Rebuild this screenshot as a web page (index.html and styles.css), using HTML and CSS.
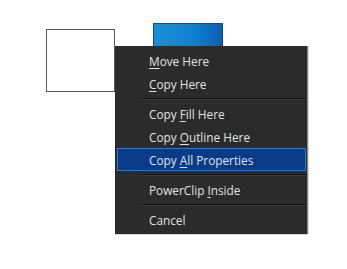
FILE: index.html
```html
<!DOCTYPE html>
<html>
<head>
<meta charset="utf-8">
<link rel="stylesheet" href="styles.css">
</head>
<body>
<div class="canvas">
  <div class="shape-white"></div>
  <div class="shape-blue"></div>
  <div class="menu">
    <div class="item"><span class="label"><u>M</u>ove Here</span></div>
    <div class="item"><span class="label"><u>C</u>opy Here</span></div>
    <div class="sep"></div>
    <div class="item"><span class="label">Copy <u>F</u>ill Here</span></div>
    <div class="item"><span class="label">Copy <u>O</u>utline Here</span></div>
    <div class="item active"><span class="label">Copy <u>A</u>ll Properties</span></div>
    <div class="sep"></div>
    <div class="item"><span class="label">PowerClip <u>I</u>nside</span></div>
    <div class="sep"></div>
    <div class="item"><span class="label">Cancel</span></div>
  </div>
</div>
</body>
</html>
```
FILE: styles.css
```css
html, body {
  margin: 0;
  padding: 0;
  background: #ffffff;
}
.canvas {
  position: relative;
  width: 347px;
  height: 269px;
  overflow: hidden;
}
.shape-white {
  position: absolute;
  left: 46px;
  top: 29px;
  width: 67px;
  height: 61px;
  border: 1px solid #5a5a5a;
  background: #ffffff;
}
.shape-blue {
  position: absolute;
  left: 153px;
  top: 23px;
  width: 68px;
  height: 30px;
  border: 1px solid #0b4f8a;
  background: linear-gradient(90deg, #1a8fd6 0%, #0f7fcf 60%, #0a5fae 100%);
}
.menu {
  position: absolute;
  left: 115px;
  top: 46px;
  width: 192px;
  padding: 3px 0;
  background: #2b2b2b;
  border-right: 1px solid #8a8a8a;
  box-shadow: 1px 0 0 #d8d8d8, 0 1px 0 #d8d8d8;
  font-family: "Open Sans", "Noto Sans", sans-serif;
  font-size: 11.8px;
  color: #e2e2e2;
}
.item {
  height: 23px;
  display: flex;
  align-items: center;
  padding-left: 32px;
  box-sizing: border-box;
  margin: 0 1px 0 2px;
}
.item u {
  text-decoration-thickness: 1px;
  text-underline-offset: 2px;
}
.item.active {
  background: #0a3b88;
  border: 1px solid #3a78c6;
  padding-left: 31px;
}
.sep {
  height: 7px;
  margin-left: 28px;
  margin-right: 2px;
  display: flex;
  flex-direction: column;
  justify-content: center;
}
.sep::before {
  content: "";
  display: block;
  height: 1px;
  background: #111111;
}
.sep::after {
  content: "";
  display: block;
  height: 1px;
  background: #3c3c3c;
}
```
